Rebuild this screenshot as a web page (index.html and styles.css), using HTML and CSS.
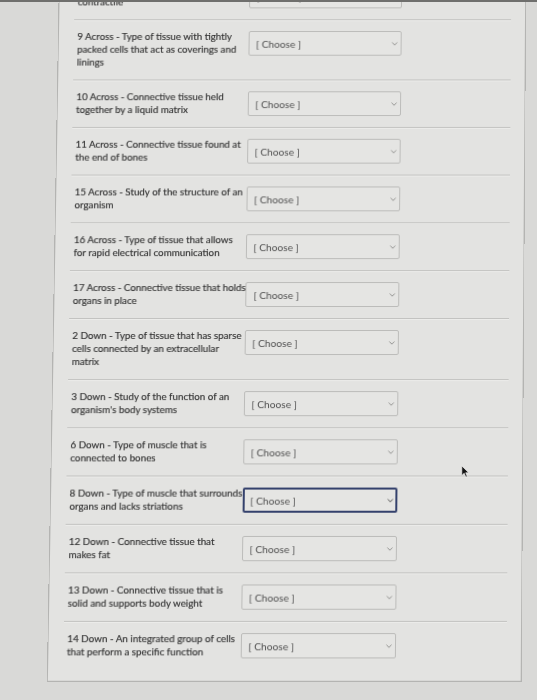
FILE: index.html
```html
<!DOCTYPE html>
<html lang="en">
<head>
<meta charset="utf-8">
<title>Tissue crossword – matching</title>
<link rel="stylesheet" href="styles.css">
</head>
<body>
<div class="bezel"></div>
<main class="screen">
  <section class="quiz">
    <div class="match match--clipped">
      <div class="match__label">contractile</div>
      <div class="choice"><select><option>[ Choose ]</option></select><svg viewBox="0 0 6 4"><path d="M0.5 0.5 L3 3.2 L5.5 0.5"/></svg></div>
    </div>
    <div class="match">
      <div class="match__label">9 Across - Type of tissue with tightly<br>packed cells that act as coverings and<br>linings</div>
      <div class="choice"><select><option>[ Choose ]</option></select><svg viewBox="0 0 6 4"><path d="M0.5 0.5 L3 3.2 L5.5 0.5"/></svg></div>
    </div>
    <div class="match">
      <div class="match__label">10 Across - Connective tissue held<br>together by a liquid matrix</div>
      <div class="choice"><select><option>[ Choose ]</option></select><svg viewBox="0 0 6 4"><path d="M0.5 0.5 L3 3.2 L5.5 0.5"/></svg></div>
    </div>
    <div class="match">
      <div class="match__label">11 Across - Connective tissue found at<br>the end of bones</div>
      <div class="choice"><select><option>[ Choose ]</option></select><svg viewBox="0 0 6 4"><path d="M0.5 0.5 L3 3.2 L5.5 0.5"/></svg></div>
    </div>
    <div class="match">
      <div class="match__label">15 Across - Study of the structure of an<br>organism</div>
      <div class="choice"><select><option>[ Choose ]</option></select><svg viewBox="0 0 6 4"><path d="M0.5 0.5 L3 3.2 L5.5 0.5"/></svg></div>
    </div>
    <div class="match">
      <div class="match__label">16 Across - Type of tissue that allows<br>for rapid electrical communication</div>
      <div class="choice"><select><option>[ Choose ]</option></select><svg viewBox="0 0 6 4"><path d="M0.5 0.5 L3 3.2 L5.5 0.5"/></svg></div>
    </div>
    <div class="match">
      <div class="match__label">17 Across - Connective tissue that holds<br>organs in place</div>
      <div class="choice"><select><option>[ Choose ]</option></select><svg viewBox="0 0 6 4"><path d="M0.5 0.5 L3 3.2 L5.5 0.5"/></svg></div>
    </div>
    <div class="match">
      <div class="match__label">2 Down - Type of tissue that has sparse<br>cells connected by an extracellular<br>matrix</div>
      <div class="choice"><select><option>[ Choose ]</option></select><svg viewBox="0 0 6 4"><path d="M0.5 0.5 L3 3.2 L5.5 0.5"/></svg></div>
    </div>
    <div class="match">
      <div class="match__label">3 Down - Study of the function of an<br>organism's body systems</div>
      <div class="choice"><select><option>[ Choose ]</option></select><svg viewBox="0 0 6 4"><path d="M0.5 0.5 L3 3.2 L5.5 0.5"/></svg></div>
    </div>
    <div class="match">
      <div class="match__label">6 Down - Type of muscle that is<br>connected to bones</div>
      <div class="choice"><select><option>[ Choose ]</option></select><svg viewBox="0 0 6 4"><path d="M0.5 0.5 L3 3.2 L5.5 0.5"/></svg></div>
    </div>
    <div class="match">
      <div class="match__label">8 Down - Type of muscle that surrounds<br>organs and lacks striations</div>
      <div class="choice choice--focus"><select><option>[ Choose ]</option></select><svg viewBox="0 0 6 4"><path d="M0.5 0.5 L3 3.2 L5.5 0.5"/></svg></div>
    </div>
    <div class="match">
      <div class="match__label">12 Down - Connective tissue that<br>makes fat</div>
      <div class="choice"><select><option>[ Choose ]</option></select><svg viewBox="0 0 6 4"><path d="M0.5 0.5 L3 3.2 L5.5 0.5"/></svg></div>
    </div>
    <div class="match">
      <div class="match__label">13 Down - Connective tissue that is<br>solid and supports body weight</div>
      <div class="choice"><select><option>[ Choose ]</option></select><svg viewBox="0 0 6 4"><path d="M0.5 0.5 L3 3.2 L5.5 0.5"/></svg></div>
    </div>
    <div class="match">
      <div class="match__label">14 Down - An integrated group of cells<br>that perform a specific function</div>
      <div class="choice"><select><option>[ Choose ]</option></select><svg viewBox="0 0 6 4"><path d="M0.5 0.5 L3 3.2 L5.5 0.5"/></svg></div>
    </div>
  </section>
</main>
<svg class="pointer" viewBox="0 0 10 16" width="8" height="13"><path d="M1 1 L1 13 L4 10.2 L6 15 L7.8 14.2 L5.9 9.6 L9.6 9.6 Z"/></svg>
</body>
</html>
```

FILE: styles.css
```css
* {
  box-sizing: border-box;
}

html,
body {
  margin: 0;
  height: 100%;
}

body {
  position: relative;
  overflow: hidden;
  background: #d9d9d7;
  font-family: Lato, "Liberation Sans", sans-serif;
  color: #333;
}

/* dark edge of the monitor along the top */
.bezel {
  position: absolute;
  top: 0;
  left: 0;
  right: 0;
  height: 2px;
  background: #6f6f6d;
  z-index: 3;
}

.screen {
  padding-left: 53px;
}

.quiz {
  width: 471px;
  margin-top: -31px;
  padding: 0 14px 11px 14.5px;
  background: #e3e3e1;
  border: 1px solid #b4b4b2;
  transform-origin: 50% 355px;
  transform: perspective(1000px) rotateX(1.3deg) skewX(-0.68deg);
}

.match {
  display: flex;
  align-items: flex-start;
  padding: 10px 0 11px 4px;
  border-top: 1px solid #c3c3c1;
  box-shadow: inset 0 1px 0 #ececea;
}

.match--clipped {
  border-top: 0;
  box-shadow: none;
  align-items: flex-end;
}

.match__label {
  flex: 0 0 172px;
  font-size: 9.8px;
  line-height: 13px;
  white-space: nowrap;
  -webkit-text-stroke: 0.15px #333;
}

.choice {
  position: relative;
  flex: 0 0 154px;
  height: 25px;
  margin-top: 1px;
}

.choice select {
  appearance: none;
  -webkit-appearance: none;
  display: block;
  width: 100%;
  height: 100%;
  margin: 0;
  padding: 0 0 0 7px;
  border: 1px solid #bcbcba;
  border-radius: 2px;
  background: #e5e5e3;
  font-family: inherit;
  font-size: 10.2px;
  color: #505050;
  outline: none;
}

.choice svg {
  position: absolute;
  right: 4px;
  top: 50%;
  width: 6px;
  height: 4px;
  margin-top: -2px;
  pointer-events: none;
  fill: none;
  stroke: #8d8d8b;
  stroke-width: 0.9;
}

.choice--focus select {
  border: 2px solid #34416c;
  padding-left: 6px;
}

.choice--focus svg {
  stroke: #4a4a4a;
}

.pointer {
  position: absolute;
  left: 461px;
  top: 465px;
  z-index: 4;
}

.pointer path {
  fill: #151515;
  stroke: #f4f4f4;
  stroke-width: 0.8;
}
```
